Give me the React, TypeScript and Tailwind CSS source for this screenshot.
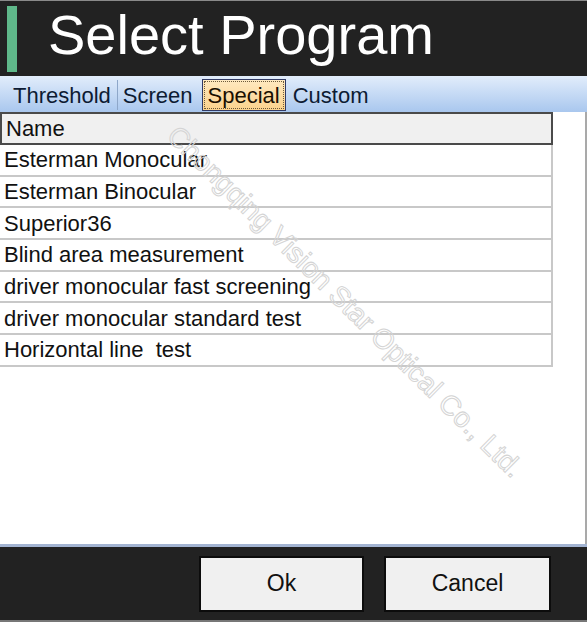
import React from "react";

const rows = [
  "Esterman Monocular",
  "Esterman Binocular",
  "Superior36",
  "Blind area measurement",
  "driver monocular fast screening",
  "driver monocular standard test",
  "Horizontal line  test",
];

export default function App() {
  const font = { fontFamily: '"Liberation Sans", Arial, sans-serif' };
  return (
    <div
      className="relative w-[587px] h-[622px] flex flex-col bg-white overflow-hidden"
      style={font}
    >
      {/* Title bar */}
      <div className="h-[76px] bg-[#222222] border-t border-[#8a8a8a] flex items-center shrink-0">
        <div className="ml-[7px] w-[10px] h-[66px] bg-[#5fb88a]" />
        <div className="ml-[31px] text-white text-[56px] leading-none pb-[8px]">
          Select Program
        </div>
      </div>

      {/* Tab strip */}
      <div className="h-[36px] shrink-0 bg-gradient-to-b from-[#e2edfb] to-[#a9c7ee] flex items-end pl-[3px] pb-[1px] text-[22px] text-[#0d1b33]">
        <div className="h-[32px] pl-[10px] pr-[6px] flex items-center">Threshold</div>
        <div className="w-px h-[30px] bg-[#8ea7c9] mb-[1px]" />
        <div className="h-[32px] pl-[5px] pr-[9px] flex items-center">Screen</div>
        <div className="h-[32px] px-[1px] flex items-center border border-[#303a66] bg-gradient-to-b from-[#ffe9c0] to-[#fbd28c]">
          <div className="h-[28px] px-[3px] flex items-center border border-dotted border-[#6d5a3a] text-[#1a0f00]">
            Special
          </div>
        </div>
        <div className="h-[32px] pl-[7px] flex items-center">Custom</div>
      </div>

      {/* Content */}
      <div className="flex-1 bg-white border-r-2 border-[#a9a9a9]">
        <div className="w-[553px] text-[22px] text-[#111]">
          <div className="h-[33px] bg-[#f0f0f0] border-2 border-[#4a4a4a] flex items-center pl-[4px]">
            Name
          </div>
          {rows.map((r) => (
            <div
              key={r}
              className="h-[31.7px] border-b-2 border-r-2 border-[#c8c8c8] flex items-center pl-[4px] whitespace-pre"
            >
              {r}
            </div>
          ))}
        </div>
      </div>

      {/* Bottom bar */}
      <div className="h-[78px] shrink-0 bg-[#222222] border-t-[3px] border-[#a3b4d2] border-b-2 border-b-[#777] flex items-center justify-end pr-[36px] gap-[20px]">
        <button className="w-[165px] h-[56px] bg-[#f0f0f0] border-2 border-[#0c0c0c] text-[23px] text-[#111]">
          Ok
        </button>
        <button className="w-[167px] h-[56px] bg-[#f0f0f0] border-2 border-[#0c0c0c] text-[23px] text-[#111]">
          Cancel
        </button>
      </div>

      {/* Watermark */}
      <div
        className="absolute left-[345px] top-[302px] pointer-events-none whitespace-nowrap text-[28px] text-transparent [-webkit-text-stroke:1px_#d4d4d4]"
        style={{ transform: "translate(-50%, -50%) rotate(44.6deg)" }}
      >
        Chongqing Vision Star Optical Co., Ltd.
      </div>
    </div>
  );
}
